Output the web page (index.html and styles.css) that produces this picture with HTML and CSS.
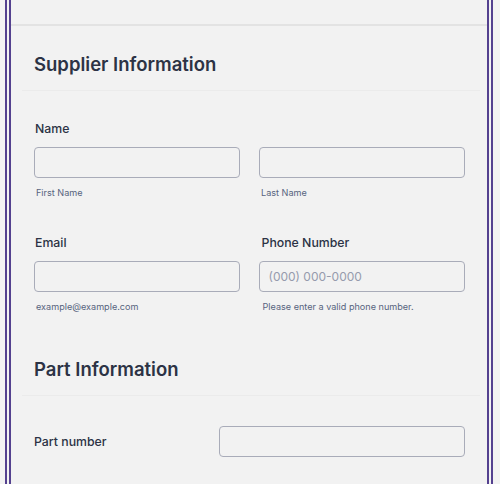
FILE: index.html
```html
<!DOCTYPE html>
<html>
<head>
    <meta charset="UTF-8">
    <title>Supplier Form</title>
    <link rel="stylesheet" href="styles.css">
</head>
<body>
    <div class="form-frame">
        <div class="form-top"></div>

        <div class="section-header">
            <h2 class="section-title">Supplier Information</h2>
        </div>

        <div class="form-line">
            <label class="form-label">Name</label>
            <div class="two-col">
                <div class="sub-field">
                    <input class="form-input" type="text">
                    <span class="sublabel">First Name</span>
                </div>
                <div class="sub-field">
                    <input class="form-input" type="text">
                    <span class="sublabel">Last Name</span>
                </div>
            </div>
        </div>

        <div class="two-col">
            <div class="form-line">
                <label class="form-label">Email</label>
                <input class="form-input" type="email">
                <span class="sublabel">example@example.com</span>
            </div>
            <div class="form-line">
                <label class="form-label">Phone Number</label>
                <input class="form-input" type="tel" placeholder="(000) 000-0000">
                <span class="sublabel">Please enter a valid phone number.</span>
            </div>
        </div>

        <div class="section-header section-header-second">
            <h2 class="section-title">Part Information</h2>
        </div>

        <div class="form-line inline-line">
            <label class="form-label">Part number</label>
            <input class="form-input" type="text">
        </div>
    </div>
</body>
</html>
```

FILE: styles.css
```css
body {
    font-family: Inter, "Noto Sans", sans-serif;
    margin: 0;
    padding: 0 7px 0 5px;
    background-color: #f2f2f2;
    color: #2c3345;
    height: 100vh;
    box-sizing: border-box;
    overflow: hidden;
}

.form-frame {
    border-left: 6px double #54418f;
    border-right: 6px double #54418f;
    height: 100%;
    box-sizing: border-box;
}

.form-top {
    height: 24px;
    border-bottom: 2px solid #e3e3e3;
}

.section-header {
    margin: 0 7px 0 11px;
    padding: 26px 12px 14px;
    border-bottom: 1px solid #ebebeb;
}

.section-header-second {
    padding-top: 43px;
}

.section-title {
    margin: 0;
    font-size: 18.5px;
    line-height: 24px;
    font-weight: 600;
}

.form-line {
    padding: 28px 22px 0 23px;
    display: flex;
    flex-direction: column;
    min-width: 0;
}

.two-col {
    display: grid;
    grid-template-columns: minmax(0, 1fr) minmax(0, 1fr);
    column-gap: 19px;
}

.two-col > .form-line {
    padding-top: 33px;
}

.two-col > .form-line:first-child {
    padding-right: 0;
}

.two-col > .form-line:last-child {
    padding-left: 0;
}

.form-label {
    font-size: 12.3px;
    line-height: 20px;
    font-weight: 500;
    margin-bottom: 8px;
    padding-left: 1px;
}

.two-col > .form-line:last-child .form-label {
    padding-left: 3px;
}

.sub-field {
    display: flex;
    flex-direction: column;
    min-width: 0;
}

.form-input {
    width: 100%;
    min-width: 0;
    height: 31px;
    box-sizing: border-box;
    border: 1px solid #a9acb9;
    border-radius: 4px;
    background-color: transparent;
    font-family: inherit;
    font-size: 12px;
    padding: 0 9px;
    color: #2c3345;
}

.form-input::placeholder {
    color: #969bad;
}

.sublabel {
    font-size: 9.1px;
    line-height: 14px;
    color: #57647e;
    margin-top: 8px;
    padding-left: 2px;
}

.two-col > .form-line:last-child .sublabel {
    padding-left: 4px;
}

.inline-line {
    flex-direction: row;
    align-items: center;
    padding-top: 30px;
}

.inline-line .form-label {
    flex: none;
    width: 185px;
    margin-bottom: 0;
    padding-left: 0;
}

.inline-line .form-input {
    flex: 1;
}
```
